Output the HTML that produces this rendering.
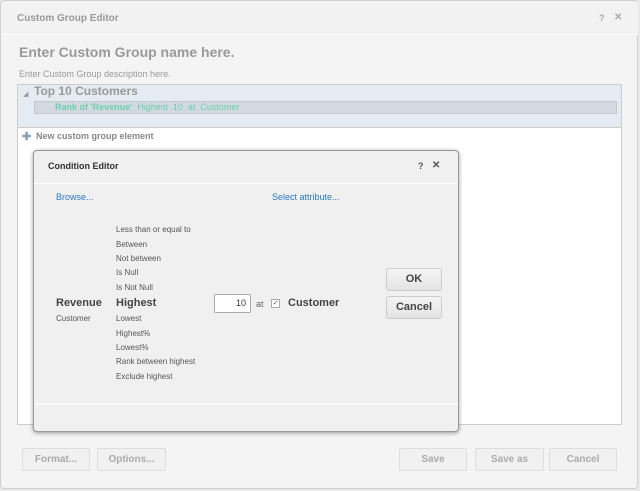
<!DOCTYPE html>
<html><head><style>
*{margin:0;padding:0;box-sizing:border-box}
body{width:640px;height:491px;background:#e9e9e9;font-family:"Liberation Sans",sans-serif;position:relative;overflow:hidden}
.a{position:absolute}
#outer{left:1px;top:1px;width:638px;height:489px;background:#f4f4f4;border:1px solid #d0d0d0;border-radius:4px}
.btn{position:absolute;height:23px;border:1px solid #ddd;background:#f1f1f1;border-radius:2px;color:#aaa;font-size:10px;font-weight:bold;text-align:center;line-height:21px}
.op{left:116px;font-size:8px;color:#555;position:absolute}
.b2{position:absolute;border:1px solid #ccc;background:linear-gradient(#f4f4f4,#e4e4e4);border-radius:3px;color:#444;font-size:11px;font-weight:bold;text-align:center;line-height:21px;width:56px;height:23px;left:386px}
</style></head><body>
<div id="outer"></div>
<div class="a" style="left:2px;top:2px;width:636px;height:33px;background:#f2f2f2;border-bottom:1px solid #fafafa"></div>
<div class="a" style="left:17px;top:13px;font-size:10px;font-weight:bold;color:#999">Custom Group Editor</div>
<div class="a" style="left:599px;top:13px;font-size:9px;font-weight:bold;color:#aaa">?</div>
<div class="a" style="left:614px;top:12px;font-size:10px;font-weight:bold;color:#aaa">✕</div>
<div class="a" style="left:19px;top:44px;font-size:14px;font-weight:bold;color:#999">Enter Custom Group name here.</div>
<div class="a" style="left:19px;top:69px;font-size:9px;color:#999">Enter Custom Group description here.</div>
<div class="a" style="left:17px;top:84px;width:605px;height:341px;background:#fff;border:1px solid #ccc"></div>
<div class="a" style="left:18px;top:85px;width:603px;height:43px;background:#e5ebf2;border-bottom:1px solid #ccc"></div>
<div class="a" style="left:23px;top:90px;font-size:7px;color:#999">◢</div>
<div class="a" style="left:34px;top:84px;font-size:12px;font-weight:bold;color:#999">Top 10 Customers</div>
<div class="a" style="left:34px;top:101px;width:583px;height:13px;background:#d3d9e0;border:1px solid #c4c9cf"></div>
<div class="a" style="left:55px;top:101px;font-size:9px;color:#6ccfae;line-height:13px"><b>Rank of 'Revenue'</b>&nbsp; Highest&nbsp; 10&nbsp; at&nbsp; Customer</div>
<div class="a" style="left:22px;top:130px;font-size:11px;font-weight:bold;color:#89a"><span style="color:#8aa0b8">✚</span></div>
<div class="a" style="left:36px;top:131px;font-size:9px;font-weight:bold;color:#888">New custom group element</div>

<div class="a" style="left:33px;top:150px;width:426px;height:282px;background:#f0f0f0;border:1px solid #999;border-radius:4px;box-shadow:0 1px 4px rgba(0,0,0,.4)"></div>
<div class="a" style="left:34px;top:183px;width:424px;height:1px;background:#fff"></div>
<div class="a" style="left:34px;top:403px;width:424px;height:2px;background:#fafafa"></div>
<div class="a" style="left:48px;top:161px;font-size:9px;font-weight:bold;color:#333">Condition Editor</div>
<div class="a" style="left:418px;top:161px;font-size:9px;font-weight:bold;color:#555">?</div>
<div class="a" style="left:432px;top:160px;font-size:10px;font-weight:bold;color:#555">✕</div>
<div class="a" style="left:56px;top:192px;font-size:9px;color:#2a7ac0">Browse...</div>
<div class="a" style="left:272px;top:192px;font-size:9px;color:#2a7ac0">Select attribute...</div>
<div class="op" style="top:225px">Less than or equal to</div>
<div class="op" style="top:240px">Between</div>
<div class="op" style="top:254px">Not between</div>
<div class="op" style="top:268px">Is Null</div>
<div class="op" style="top:283px">Is Not Null</div>
<div class="a" style="left:116px;top:297px;font-size:11px;font-weight:bold;color:#444">Highest</div>
<div class="op" style="top:314px">Lowest</div>
<div class="op" style="top:329px">Highest%</div>
<div class="op" style="top:343px">Lowest%</div>
<div class="op" style="top:357px">Rank between highest</div>
<div class="op" style="top:372px">Exclude highest</div>
<div class="a" style="left:56px;top:297px;font-size:11px;font-weight:bold;color:#444">Revenue</div>
<div class="a" style="left:56px;top:314px;font-size:8px;color:#555">Customer</div>
<div class="a" style="left:214px;top:294px;width:37px;height:19px;background:#fff;border:1px solid #aaa;border-radius:2px;font-size:9px;color:#333;text-align:right;padding-right:4px;line-height:17px">10</div>
<div class="a" style="left:256px;top:299px;font-size:9px;color:#666">at</div>
<div class="a" style="left:271px;top:299px;width:9px;height:9px;border:1px solid #aaa;background:#fff;font-size:7px;line-height:7px;text-align:center;color:#555">✓</div>
<div class="a" style="left:288px;top:297px;font-size:11px;font-weight:bold;color:#444">Customer</div>
<div class="b2" style="top:268px">OK</div>
<div class="b2" style="top:296px">Cancel</div>

<div class="btn" style="left:22px;top:448px;width:68px">Format...</div>
<div class="btn" style="left:97px;top:448px;width:69px">Options...</div>
<div class="btn" style="left:399px;top:448px;width:68px">Save</div>
<div class="btn" style="left:475px;top:448px;width:69px">Save as</div>
<div class="btn" style="left:549px;top:448px;width:68px">Cancel</div>
</body></html>
